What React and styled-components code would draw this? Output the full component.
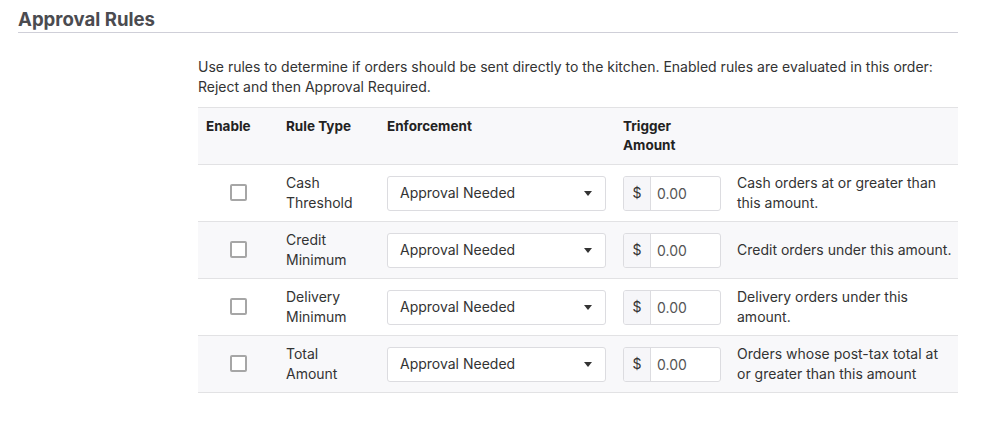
import React from 'react'
import styled, { createGlobalStyle } from 'styled-components'

const GlobalStyle = createGlobalStyle`
  body {
    margin: 0;
    background: #fff;
    font-family: Inter, "Liberation Sans", Arial, sans-serif;
    color: #333;
  }
`;

const rules = [
  { id: 'cash', type: ['Cash', 'Threshold'], note: 'Cash orders at or greater than this amount.' },
  { id: 'credit', type: ['Credit', 'Minimum'], note: 'Credit orders under this amount.' },
  { id: 'delivery', type: ['Delivery', 'Minimum'], note: 'Delivery orders under this amount.' },
  { id: 'total', type: ['Total', 'Amount'], note: 'Orders whose post-tax total at or greater than this amount' },
]

const Caret = () => (
  <svg width="10" height="5" viewBox="0 0 10 5">
    <path d="M1 0h8L5 5z" fill="#333" />
  </svg>
)

const RuleRow = ({ type, note, striped }) => (
  <Row $striped={striped}>
    <Cell $center>
      <CheckBox type="checkbox" />
    </Cell>
    <Cell>{type[0]}<br />{type[1]}</Cell>
    <Cell>
      <Select>
        <span>Approval Needed</span>
        <Caret />
      </Select>
    </Cell>
    <Cell>
      <InputGroup>
        <Addon>$</Addon>
        <Amount defaultValue="0.00" />
      </InputGroup>
    </Cell>
    <Cell $tight>{note}</Cell>
  </Row>
)

const App = () => {
  return (
    <Page>
      <GlobalStyle />
      <Heading>Approval Rules</Heading>
      <Content>
        <Intro>
          Use rules to determine if orders should be sent directly to the kitchen. Enabled rules are evaluated in this order: Reject and then Approval Required.
        </Intro>
        <Table>
          <colgroup>
            <col style={{ width: 80 }} />
            <col style={{ width: 101 }} />
            <col style={{ width: 236 }} />
            <col style={{ width: 114 }} />
            <col style={{ width: 229 }} />
          </colgroup>
          <thead>
            <HeadRow>
              <Th>Enable</Th>
              <Th>Rule Type</Th>
              <Th>Enforcement</Th>
              <Th>Trigger<br />Amount</Th>
              <Th />
            </HeadRow>
          </thead>
          <tbody>
            {rules.map((r, i) => (
              <RuleRow key={r.id} type={r.type} note={r.note} striped={i % 2 === 1} />
            ))}
          </tbody>
        </Table>
      </Content>
    </Page>
  )
}

const Page = styled.div`
  width: 940px;
  padding: 8px 0 0 18px;
`;

const Heading = styled.h2`
  margin: 0;
  font-size: 18.6px;
  font-weight: 700;
  color: #4b4b50;
  line-height: 22px;
  padding-bottom: 2px;
  border-bottom: 1px solid #cfcfd8;
`;

const Content = styled.div`
  margin-left: 180px;
  padding-top: 24px;
`;

const Intro = styled.p`
  margin: 0 0 10px;
  font-size: 14px;
  line-height: 20px;
  color: #333;
`;

const Table = styled.table`
  width: 760px;
  border-collapse: collapse;
  table-layout: fixed;
`;

const HeadRow = styled.tr`
  background: #f8f8fa;
  border-top: 1px solid #e2e2e4;
  border-bottom: 1px solid #e2e2e4;
`;

const Th = styled.th`
  text-align: left;
  vertical-align: top;
  height: 57px;
  box-sizing: border-box;
  padding: 9px 8px 8px;
  font-size: 13.5px;
  line-height: 19px;
  font-weight: 700;
  color: #222;
`;

const Row = styled.tr`
  background: ${p => (p.$striped ? '#f8f8fa' : '#fff')};
  border-bottom: 1px solid #e2e2e4;
`;

const Cell = styled.td`
  height: 57px;
  box-sizing: border-box;
  padding: 0 ${p => (p.$tight ? '5px' : '8px')} 0 8px;
  vertical-align: middle;
  font-size: 14px;
  line-height: 20px;
  color: #333;
  text-align: ${p => (p.$center ? 'center' : 'left')};
`;

const CheckBox = styled.input`
  appearance: none;
  width: 17px;
  height: 17px;
  margin: 3px 0 0 0;
  border: 2px solid #a6a6a6;
  border-radius: 2px;
  background: #fff;
  box-sizing: border-box;
`;

const Select = styled.div`
  display: flex;
  align-items: center;
  justify-content: space-between;
  box-sizing: border-box;
  width: 219px;
  height: 35px;
  padding: 0 12px;
  border: 1px solid #dcdce0;
  border-radius: 3px;
  background: #fff;
  font-size: 14px;
  color: #333;
`;

const InputGroup = styled.div`
  display: flex;
  box-sizing: border-box;
  width: 98px;
  height: 35px;
  border: 1px solid #dcdce0;
  border-radius: 3px;
  overflow: hidden;
  background: #fff;
`;

const Addon = styled.span`
  display: flex;
  align-items: center;
  justify-content: center;
  width: 26px;
  background: #f6f6f9;
  border-right: 1px solid #dcdce0;
  font-size: 14px;
  color: #333;
`;

const Amount = styled.input`
  flex: 1;
  min-width: 0;
  border: none;
  outline: none;
  padding: 0 6px;
  font-family: inherit;
  font-size: 14px;
  color: #555;
  background: transparent;
`;

export default App
